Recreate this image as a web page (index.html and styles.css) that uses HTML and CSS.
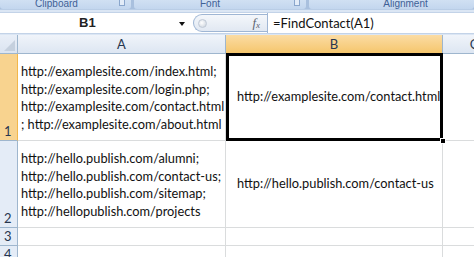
FILE: index.html
```html
<!DOCTYPE html>
<html>
<head>
<meta charset="utf-8">
<link rel="stylesheet" href="styles.css">
</head>
<body>
<div class="app">
  <div class="ribbon">
    <div class="group g-clip"><span class="glabel">Clipboard</span><span class="launcher"></span></div>
    <div class="group g-font"><span class="glabel">Font</span><span class="launcher"></span></div>
    <div class="group g-align"><span class="glabel">Alignment</span></div>
  </div>
  <div class="fbar">
    <div class="namebox"><span class="nb-text">B1</span><span class="nb-arrow"></span></div>
    <div class="fxpill"><span class="knob"></span><span class="fx">f<sub>x</sub></span></div>
    <div class="finput">=FindContact(A1)</div>
  </div>
  <div class="sheet">
    <div class="corner"><span class="tri"></span></div>
    <div class="colh">A</div>
    <div class="colh sel">B</div>
    <div class="colh">C</div>

    <div class="rowh sel">1</div>
    <div class="cell wrap">
      <span>http://examplesite.com/index.html;</span>
      <span>http://examplesite.com/login.php;</span>
      <span>http://examplesite.com/contact.html</span>
      <span>; http://examplesite.com/about.html</span>
    </div>
    <div class="cell mid active">http://examplesite.com/contact.html<span class="handle"></span></div>
    <div class="cell"></div>

    <div class="rowh">2</div>
    <div class="cell wrap">
      <span>http://hello.publish.com/alumni;</span>
      <span>http://hello.publish.com/contact-us;</span>
      <span>http://hello.publish.com/sitemap;</span>
      <span>http://hellopublish.com/projects</span>
    </div>
    <div class="cell mid">http://hello.publish.com/contact-us</div>
    <div class="cell"></div>

    <div class="rowh">3</div>
    <div class="cell"></div>
    <div class="cell"></div>
    <div class="cell"></div>

    <div class="rowh">4</div>
    <div class="cell"></div>
    <div class="cell"></div>
    <div class="cell"></div>
  </div>
</div>
</body>
</html>
```

FILE: styles.css
```css
* { box-sizing: border-box; }
html, body { margin: 0; padding: 0; }
body {
  width: 474px;
  height: 257px;
  overflow: hidden;
  background: #dbe6f4;
  font-family: Lato, "Liberation Sans", sans-serif;
}
.app { display: flex; flex-direction: column; width: 474px; height: 257px; overflow: hidden; }

.ribbon {
  height: 10px;
  display: flex;
  gap: 3px;
  background: #a9c0de;
  border-bottom: 1px solid #b9cde6;
  flex: none;
}
.group {
  position: relative;
  display: flex;
  justify-content: center;
  overflow: hidden;
  background: linear-gradient(#d0e0f3, #c3d6ee);
  border-radius: 0 0 3px 3px;
}
.g-clip { width: 131px; }
.g-font { width: 172px; }
.g-align { flex: 1; }
.glabel {
  font-family: "Liberation Sans", sans-serif;
  font-size: 10px;
  line-height: 10px;
  margin-top: -1px;
  color: #3e6196;
}
.launcher {
  position: absolute;
  right: 6px;
  top: 0;
  width: 6px;
  height: 6px;
  border: 1px solid #8aa6cc;
  border-top: none;
  background: #e3ecf8;
}
.g-clip .glabel { margin-right: 18px; }
.g-font .glabel { margin-right: 20px; }
.g-align .glabel { margin-left: 28px; }

.fbar {
  height: 22px;
  margin-top: 2px;
  display: flex;
  flex: none;
  border-top: 1px solid #c3d3e8;
  border-bottom: 1px solid #c3d3e8;
  background: #fff;
}
.namebox {
  width: 193px;
  display: flex;
  align-items: center;
  background: #fff;
  position: relative;
}
.nb-text {
  position: absolute;
  left: 79px;
  top: 2px;
  font-family: "Liberation Sans", sans-serif;
  font-weight: bold;
  font-size: 13px;
  color: #222;
}
.nb-arrow {
  position: absolute;
  left: 179px;
  top: 9px;
  width: 0; height: 0;
  border-left: 3.5px solid transparent;
  border-right: 3.5px solid transparent;
  border-top: 4px solid #111;
}
.fxpill {
  width: 74px;
  margin: 1px 0;
  border: 1px solid #9fb6d4;
  border-right: none;
  border-radius: 10px 0 0 10px;
  background: linear-gradient(#f4f7fb, #e1e8f2);
  display: flex;
  align-items: center;
  justify-content: space-between;
  padding: 0 7px 0 4px;
}
.knob {
  width: 9px; height: 9px;
  border-radius: 50%;
  background: radial-gradient(circle at 40% 40%, #fff, #c7cfda);
  border: 1px solid #c0c9d6;
}
.fx {
  font-family: "Liberation Serif", serif;
  font-style: italic;
  font-size: 13px;
  color: #5c6470;
}
.fx sub { font-size: 9px; vertical-align: -1px; }
.finput {
  flex: 1;
  border-left: 1px solid #9fb6d4;
  padding-left: 5px;
  font-size: 13px;
  line-height: 20px;
  color: #111;
}

.sheet {
  margin-top: 1px;
  flex: 1;
  width: 506px;
  display: grid;
  grid-template-columns: 18px 208px 217px 63px;
  grid-template-rows: 19px 87px 87px 18px 1fr;
  background: #fff;
}
.corner {
  background: linear-gradient(#e9eff8, #dbe4f1);
  border-right: 1px solid #9eb6ce;
  border-bottom: 1px solid #9eb6ce;
  position: relative;
}
.tri {
  position: absolute;
  right: 2px; bottom: 2px;
  width: 0; height: 0;
  border-left: 11px solid transparent;
  border-bottom: 11px solid #c5d0de;
}
.colh {
  background: linear-gradient(#f0f4fa, #dde6f2);
  border-right: 1px solid #9eb6ce;
  border-bottom: 1px solid #9eb6ce;
  display: flex;
  align-items: center;
  justify-content: center;
  font-size: 13px;
  color: #27364f;
}
.colh.sel {
  background: linear-gradient(#fbdca4, #f5c66d);
  border-bottom-color: #f2b74a;
}
.rowh {
  background: #e4ecf7;
  border-right: 1px solid #9eb6ce;
  border-bottom: 1px solid #9eb6ce;
  display: flex;
  align-items: flex-end;
  padding: 0 0 1px 4px;
  font-size: 13px;
  line-height: 16px;
  color: #27364f;
}
.rowh.sel {
  background: #f8d38f;
  border-right-color: #f2b74a;
}
.cell {
  border-right: 1px solid #dadcdd;
  border-bottom: 1px solid #dadcdd;
  font-size: 12.8px;
  line-height: 17.4px;
  color: #111;
  white-space: nowrap;
  overflow: hidden;
}
.cell.wrap {
  display: flex;
  flex-direction: column;
  justify-content: flex-end;
  padding: 0 0 7px 3px;
}
.cell.mid {
  display: flex;
  align-items: center;
  padding-left: 11px;
}
.cell.active {
  position: relative;
  overflow: visible;
}
.cell.active::after {
  content: "";
  position: absolute;
  left: 0; top: -1px; right: -1px; bottom: -1px;
  border: 3px solid #000;
  pointer-events: none;
}
.handle {
  position: absolute;
  right: -4px;
  bottom: -4px;
  width: 6px; height: 6px;
  background: #000;
  border: 1px solid #fff;
  z-index: 2;
}
```
